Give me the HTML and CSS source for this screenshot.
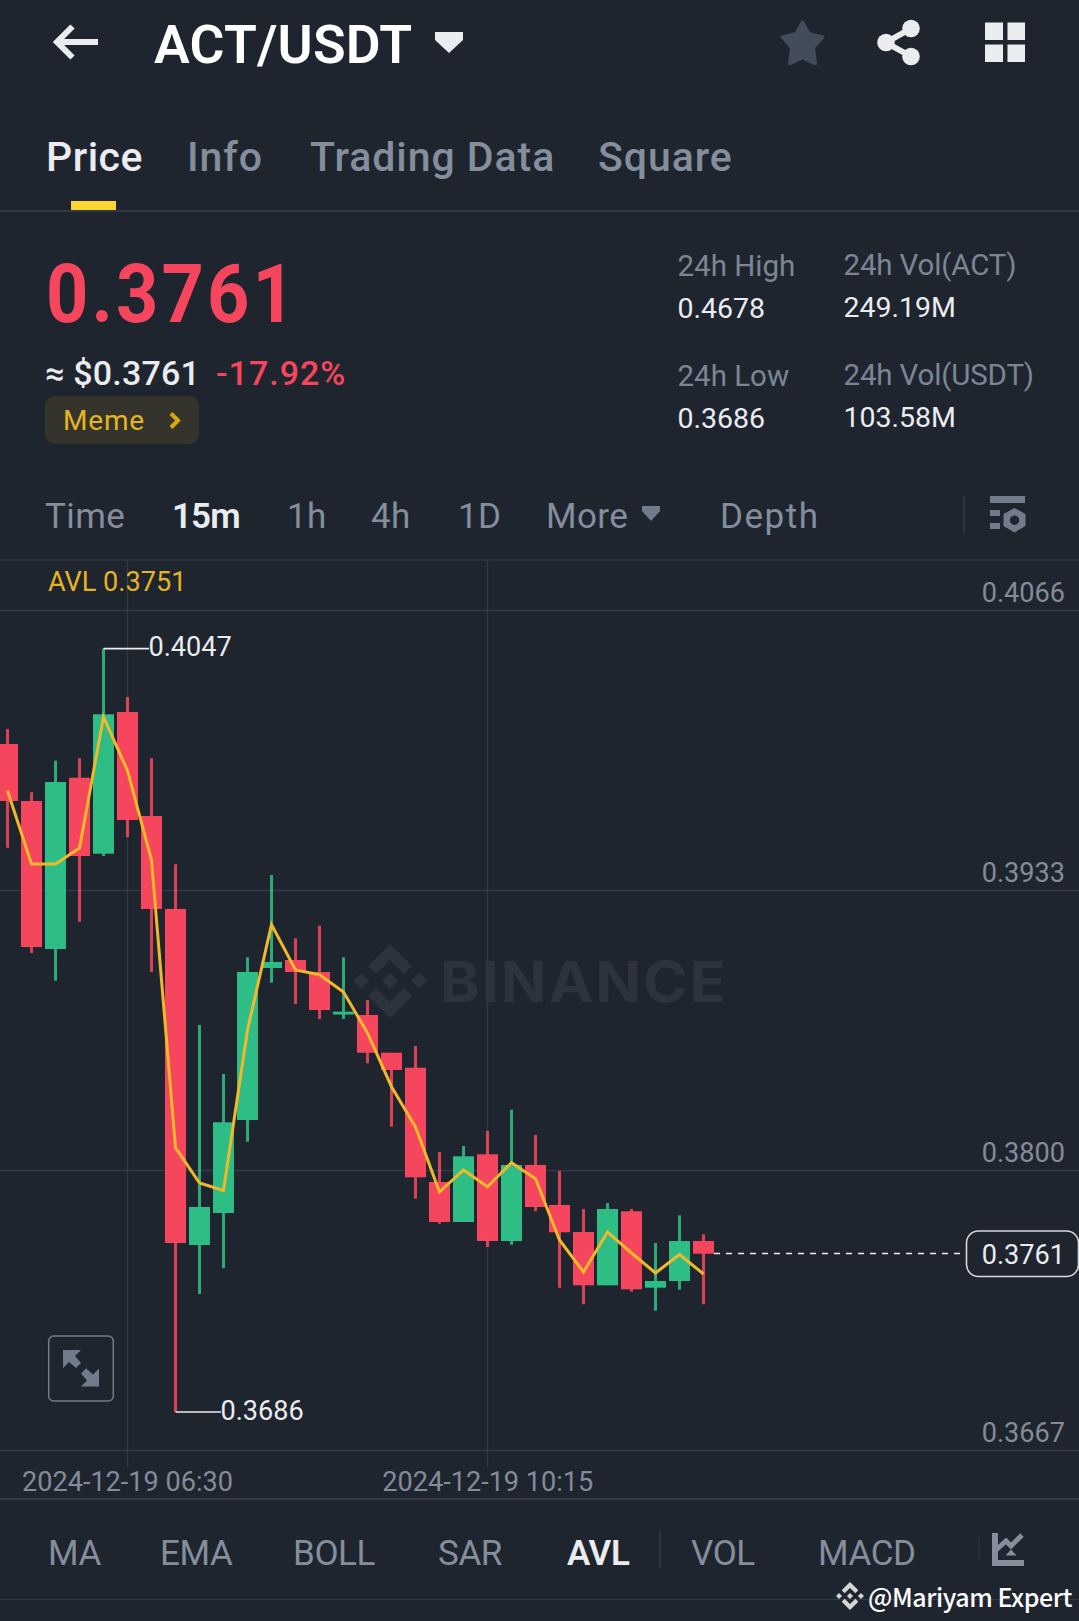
FILE: index.html
```
<!DOCTYPE html>
<html lang="en">
<head>
  <meta charset="UTF-8" />
  <meta name="viewport" content="width=device-width, initial-scale=1.0" />
  <title>ACT/USDT</title>
  <link rel="stylesheet" href="styles.css">
</head>
<body>
  <div class="header">
    <svg class="back" width="46" height="38" viewBox="0 0 46 38">
      <path d="M46 19H6M20.500 3.500L5 19L20.500 34.500" fill="none" stroke="#eaecef" stroke-width="6" />
    </svg>
    <h1 class="pair">ACT/USDT</h1>
    <svg class="pair-caret" width="28" height="21" viewBox="0 0 28 21">
      <path d="M0 0H28V8L14 21L0 8Z" fill="#eaecef" />
    </svg>
    <div class="header-icons">
      <svg width="45" height="46" viewBox="0 0 45 46">
        <path d="M22.500 3L29 14.500L43 18L33.500 28.500L35.500 45L22.500 39L9.500 45L11.500 28.500L2 18L16 14.500Z" fill="#434c5a" stroke="#434c5a" stroke-width="3" stroke-linejoin="round" />
      </svg>
      <svg width="43" height="47" viewBox="0 0 43 47">
        <path d="M34 9.500L9 23.500L34 37.500" fill="none" stroke="#eaecef" stroke-width="6" />
        <circle cx="9" cy="23.500" r="8.800" fill="#eaecef" />
        <circle cx="34" cy="9.500" r="8.800" fill="#eaecef" />
        <circle cx="34" cy="37.500" r="8.800" fill="#eaecef" />
      </svg>
      <svg width="41" height="41" viewBox="0 0 41 41">
        <path d="M0 .5H18V18H0ZM22.500 .5H40V18H22.500ZM0 22.500H18V40H0ZM22.500 22.500H40V40H22.500Z" fill="#eaecef" />
      </svg>
    </div>
  </div>

  <div class="tabs">
    <div class="tab active">Price</div>
    <div class="tab">Info</div>
    <div class="tab">Trading Data</div>
    <div class="tab">Square</div>
  </div>

  <div class="summary">
    <div class="quote">
      <div class="last-price">0.3761</div>
      <div class="sub-price"><span class="fiat">≈ $0.3761</span><span class="change">-17.92%</span></div>
      <div class="tag">Meme
        <svg width="12" height="17" viewBox="0 0 12 17">
          <path d="M2 1.500L9 8.500L2 15.500" fill="none" stroke="#d9a614" stroke-width="4" />
        </svg>
      </div>
    </div>
    <div class="stats">
      <div class="stat"><div class="label">24h High</div><div class="value">0.4678</div></div>
      <div class="stat"><div class="label">24h Low</div><div class="value">0.3686</div></div>
    </div>
    <div class="stats volume">
      <div class="stat"><div class="label">24h Vol(ACT)</div><div class="value">249.19M</div></div>
      <div class="stat"><div class="label">24h Vol(USDT)</div><div class="value">103.58M</div></div>
    </div>
  </div>

  <div class="intervals">
    <div class="item">Time</div>
    <div class="item active">15m</div>
    <div class="item">1h</div>
    <div class="item">4h</div>
    <div class="item">1D</div>
    <div class="item more">More
      <svg width="18" height="15" viewBox="0 0 18 15">
        <path d="M0 0H18V5L9 15L0 5Z" fill="#727b8b" />
      </svg>
    </div>
    <div class="item depth">Depth</div>
    <div class="divider"></div>
    <svg class="settings" width="36" height="37" viewBox="0 0 36 37">
      <path d="M0 0H35V7H0ZM0 14H10V20H0ZM0 27H10V33H0Z" fill="#727b8b" />
      <path d="M24.500 12L35.500 18V30L24.500 36.500L13.500 30V18ZM24.500 19.500a4.700 4.700 0 1 0 .01 0Z" fill="#727b8b" fill-rule="evenodd" />
    </svg>
  </div>

  <svg class="chart" width="1079" height="937" viewBox="0 561 1079 937">
    <g class="grid-lines">
      <path d="M0 610.500H1079M0 890.500H1079M0 1170.500H1079M0 1450.500H1079M127.500 561V1467M487.500 561V1467" />
    </g>

    <g class="watermark">
      <g transform="translate(390 981)">
        <path d="M-22 -15L0 -37L22 -15L14 -7L0 -21L-14 -7ZM-22 15L0 37L22 15L14 7L0 21L-14 7Z" />
        <path d="M0 -8L8 0L0 8L-8 0ZM-29 -8L-21 0L-29 8L-37 0ZM29 -8L37 0L29 8L21 0Z" />
      </g>
      <text x="440" y="1001.500" textLength="288" lengthAdjust="spacingAndGlyphs">BINANCE</text>
    </g>

    <g id="candles"></g>
    <polyline id="avl" class="avl-line" />

    <path class="marker" d="M103.500 648.700H149M175.500 1412H221" />
    <text class="mark" x="148.500" y="656">0.4047</text>
    <text class="mark" x="220.500" y="1419.500">0.3686</text>
    <text class="avl-label" x="48" y="591">AVL 0.3751</text>

    <g class="axis">
      <text x="1065" y="602" text-anchor="end">0.4066</text>
      <text x="1065" y="882" text-anchor="end">0.3933</text>
      <text x="1065" y="1162" text-anchor="end">0.3800</text>
      <text x="1065" y="1442" text-anchor="end">0.3667</text>
      <text x="127.500" y="1491" text-anchor="middle">2024-12-19 06:30</text>
      <text x="487.800" y="1491" text-anchor="middle">2024-12-19 10:15</text>
    </g>

    <path class="last-line" d="M714 1253.500H961" />
    <rect class="last-box" x="966.500" y="1231" width="112" height="45.500" rx="12" />
    <text class="mark" x="1065" y="1264" text-anchor="end">0.3761</text>

    <rect class="expand-box" x="48.700" y="1336" width="64.600" height="65" rx="5" />
    <path class="expand-arrows" d="M63 1350H81L75 1356L81 1363L76 1368L69 1362L63 1368ZM99 1386.500H81L87 1380.500L81 1373.500L86 1368.500L93 1374.500L99 1368.500Z" />
  </svg>

  <div class="indicators">
    <div class="item">MA</div>
    <div class="item">EMA</div>
    <div class="item">BOLL</div>
    <div class="item">SAR</div>
    <div class="item active">AVL</div>
    <div class="divider"></div>
    <div class="item">VOL</div>
    <div class="item">MACD</div>
    <div class="divider short"></div>
    <svg width="32" height="33" viewBox="0 0 32 33">
      <path d="M0 0H6V27H32V33H0Z" fill="#848e9c" />
      <path d="M4 17L14 8L19 13L30 2" fill="none" stroke="#848e9c" stroke-width="5" />
      <path d="M13.500 22.500L19 16.500L24.500 22.500Z" fill="#848e9c" />
    </svg>
  </div>

  <div class="credit">
    <svg width="28" height="28" viewBox="-37 -37 74 74">
      <path d="M-22 -15L0 -37L22 -15L14 -7L0 -21L-14 -7ZM-22 15L0 37L22 15L14 7L0 21L-14 7Z" />
      <path d="M0 -8L8 0L0 8L-8 0ZM-29 -8L-21 0L-29 8L-37 0ZM29 -8L37 0L29 8L21 0Z" />
    </svg>
    <span>@Mariyam Expert</span>
  </div>

  <script src="script.js"></script>
</body>
</html>
```
FILE: styles.css
```
* {
  box-sizing: border-box;
}

body {
  font-family: Roboto, "Liberation Sans", sans-serif;
  background-color: #1f252f;
  color: #eaecef;
  margin: 0;
  width: 1079px;
  height: 1621px;
  position: relative;
  overflow: hidden;
}

svg {
  display: block;
  flex: none;
}

.header {
  height: 84px;
  padding: 0 53px 0 52px;
  display: flex;
  align-items: center;
}

.pair {
  margin: 0 0 0 56px;
  padding-top: 5px;
  width: 281px;
  font-size: 53.5px;
  font-weight: 600;
  letter-spacing: 0.2px;
  color: #ffffff;
  white-space: nowrap;
}

.header-icons {
  margin-left: auto;
  display: flex;
  align-items: center;
}

.header-icons svg + svg {
  margin-left: 52px;
}

.header-icons svg:last-child {
  margin-left: 65px;
}

.tabs {
  height: 128px;
  padding: 46px 0 0 46px;
  border-bottom: 2px solid #313844;
  display: grid;
  grid-template-columns: 141px 123px 288px auto;
}

.tab {
  position: relative;
  height: 80px;
  line-height: 55px;
  font-size: 41px;
  font-weight: 500;
  letter-spacing: 0.95px;
  color: #848e9c;
}

.tab.active {
  color: #eaecef;
  letter-spacing: 0.5px;
}

.tab.active::after {
  content: "";
  position: absolute;
  left: 25px;
  bottom: 0;
  width: 45px;
  height: 9px;
  background-color: #fcd535;
}

.summary {
  height: 262px;
  padding: 34px 0 0 46px;
  display: grid;
  grid-template-columns: 631.5px 166px auto;
}

.quote {
  padding-top: 3px;
}

.last-price {
  line-height: 90px;
  font-size: 82px;
  font-weight: 700;
  letter-spacing: 3.5px;
  color: #f6465d;
  transform: scaleX(0.9);
  transform-origin: left;
}

.sub-price {
  margin-top: 14px;
  line-height: 40px;
  font-size: 34px;
  font-weight: 500;
  display: flex;
  gap: 16px;
}

.fiat {
  margin-left: -1px;
  letter-spacing: 0.2px;
}

.change {
  letter-spacing: 1px;
  color: #f6465d;
}

.tag {
  margin: 3px 0 0 -1px;
  width: 154px;
  height: 48px;
  padding: 0 18px 0 18px;
  border-radius: 10px;
  background-color: #35342c;
  color: #e5b520;
  font-size: 28px;
  letter-spacing: 0.8px;
  display: flex;
  align-items: center;
  justify-content: space-between;
}

.volume {
  margin-top: -1px;
}

.stat {
  height: 110px;
}

.label {
  line-height: 40px;
  font-size: 29.5px;
  color: #7d8594;
}

.value {
  line-height: 46px;
  font-size: 28.5px;
}

.volume .label {
  letter-spacing: -0.15px;
}

.intervals {
  height: 87px;
  padding-left: 45px;
  border-bottom: 2px solid #2a313b;
  display: grid;
  grid-template-columns: 127px 115px 84px 87px 88px 174px 243px 27px auto;
  align-items: center;
}

.item {
  font-size: 35px;
  color: #848e9c;
  white-space: nowrap;
}

.item.active {
  color: #eaecef;
  font-weight: 600;
}

.intervals .item {
  letter-spacing: 0.4px;
}

.intervals .item.active {
  letter-spacing: -0.9px;
}

.intervals .item.depth {
  letter-spacing: 1.5px;
}

.more {
  display: flex;
}

.more svg {
  margin: 10px 0 0 14px;
}

.divider {
  width: 2px;
  height: 37px;
  background-color: #2f3642;
}

.intervals .divider,
.settings {
  margin-bottom: 5px;
}

.chart text {
  font-size: 27.1px;
}

.grid-lines path {
  stroke: #333a46;
  stroke-width: 1.5;
}

.watermark {
  fill: #2d333d;
}

.chart .watermark text {
  font-family: Inter, sans-serif;
  font-size: 56px;
  font-weight: 700;
  letter-spacing: 2px;
}

.up {
  fill: #2ebd85;
}

.down {
  fill: #f6465d;
}

.wick {
  opacity: 0.88;
}

.avl-line {
  fill: none;
  stroke: #f0b92b;
  stroke-width: 3;
}

.marker {
  fill: none;
  stroke: #eaecef;
  stroke-width: 1.7;
}

.mark {
  fill: #eaecef;
}

.avl-label {
  fill: #e5b520;
}

.axis {
  fill: #848b99;
}

.last-line {
  stroke: #eaecef;
  stroke-width: 1.7;
  stroke-dasharray: 6 6;
}

.last-box {
  fill: #1f252f;
  stroke: #d5d8dd;
  stroke-width: 1.6;
}

.expand-box {
  fill: none;
  stroke: #727b8b;
  stroke-width: 1.5;
}

.expand-arrows {
  fill: #727b8b;
}

.indicators {
  height: 102px;
  padding-left: 48px;
  border-top: 2px solid #323944;
  border-bottom: 1px solid #323944;
  display: grid;
  grid-template-columns: 112px 133px 145px 129px 92px 32px 127px 160px 14px auto;
  align-items: center;
}

.indicators .item {
  padding-top: 7px;
  letter-spacing: -0.4px;
}

.divider.short {
  height: 26px;
  opacity: 0.5;
}

/* floats over the bottom rule */
.credit {
  position: absolute;
  right: 7px;
  bottom: 5px;
  height: 40px;
  display: flex;
  align-items: center;
  gap: 4px;
  font-family: "Noto Sans CJK SC", sans-serif;
  font-size: 25px;
  font-weight: 500;
  letter-spacing: -0.45px;
  color: #ffffff;
}

.credit svg {
  fill: #d6d6d6;
}
```
FILE: script.js
```
const STEP = 24;
const FIRST_X = 7.5;

// [direction, high, body top, body bottom, low, avl]
const candles = [
  ["down", 729, 744, 801, 847.7, 790.7],
  ["down", 792.3, 801, 947, 953, 864],
  ["up", 760.7, 782, 949, 980.7, 864],
  ["down", 758.3, 777.7, 856, 921.7, 848],
  ["up", 648.7, 714.3, 853.7, 856, 717],
  ["down", 697, 712, 820, 837, 770.7],
  ["down", 758.3, 816, 909, 972, 860],
  ["down", 864.3, 909, 1243, 1412, 1147.7],
  ["up", 1025, 1207, 1245, 1294, 1183],
  ["up", 1074, 1122.3, 1213, 1268.3, 1190.5],
  ["up", 957.3, 972, 1120, 1141.7, 1030],
  ["up", 875, 962, 968, 982.7, 924.5],
  ["down", 938.3, 960, 972, 1004, 970],
  ["down", 925.7, 972, 1010, 1019, 974.7],
  ["up", 957.3, 1011.7, 1014.5, 1019, 992],
  ["down", 1000, 1015, 1052.7, 1063.3, 1033],
  ["down", 1052.7, 1052.7, 1070, 1126.7, 1086.7],
  ["down", 1046, 1067.7, 1177.3, 1198.7, 1127],
  ["down", 1152, 1182, 1222, 1223.7, 1192],
  ["up", 1146, 1156.3, 1222, 1222, 1170],
  ["down", 1131, 1154.3, 1241, 1247, 1186.7],
  ["up", 1109.7, 1165, 1241, 1244.7, 1162.7],
  ["down", 1135, 1165, 1207, 1211.3, 1178.7],
  ["down", 1171, 1205, 1232.3, 1287.7, 1240],
  ["down", 1209, 1232, 1285.3, 1304.3, 1272],
  ["up", 1203, 1209, 1285.3, 1285.3, 1232],
  ["down", 1209, 1211.3, 1289.3, 1291.7, 1253],
  ["up", 1243, 1281, 1287.7, 1310.7, 1273],
  ["up", 1215.3, 1241, 1281, 1289.7, 1254.5],
  ["down", 1234.3, 1241, 1253.7, 1304.3, 1274]
];

const group = document.getElementById("candles");

function addRect(className, x, y, width, height) {
  const rect = document.createElementNS("http://www.w3.org/2000/svg", "rect");
  rect.setAttribute("class", className);
  rect.setAttribute("x", x);
  rect.setAttribute("y", y);
  rect.setAttribute("width", width);
  rect.setAttribute("height", height);
  group.appendChild(rect);
}

candles.forEach(([dir, high, top, bottom, low], i) => {
  const x = FIRST_X + i * STEP;
  addRect(`wick ${dir}`, x - 1.5, high, 3, low - high);
  addRect(dir, x - 10.5, top, 21, bottom - top);
});

const points = candles.map((c, i) => `${FIRST_X + i * STEP},${c[5]}`);
document.getElementById("avl").setAttribute("points", points.join(" "));
```
